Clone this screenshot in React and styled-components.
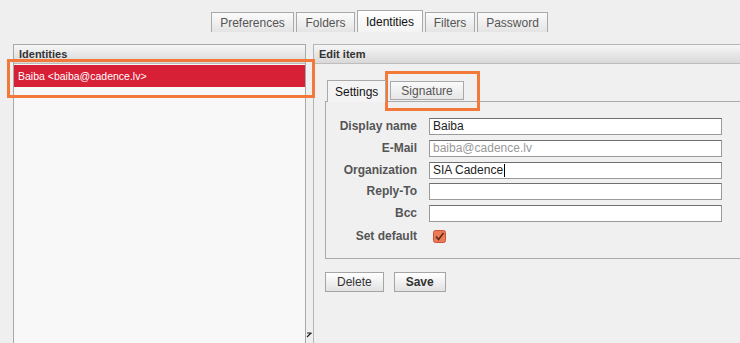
import styled, { createGlobalStyle } from "styled-components";

const GlobalStyle = createGlobalStyle`
  html, body {
    margin: 0;
    padding: 0;
    background: #efefef;
    font-family: "Liberation Sans", Arial, sans-serif;
    overflow: hidden;
  }
`;

const Page = styled.div`
  position: relative;
  width: 740px;
  height: 343px;
  overflow: hidden;
`;

const TopTabs = styled.div`
  display: flex;
  align-items: flex-end;
  gap: 2px;
  height: 32px;
  padding-left: 211px;
  box-sizing: border-box;
`;

const TopTab = styled.div`
  width: ${(p) => p.$w}px;
  height: ${(p) => (p.$active ? "22px" : "20px")};
  display: flex;
  align-items: center;
  justify-content: center;
  box-sizing: border-box;
  border: 1px solid #a9a9a9;
  border-bottom: none;
  background: ${(p) =>
    p.$active
      ? "linear-gradient(#ffffff, #f3f3f3)"
      : "linear-gradient(#fbfbfb, #e4e4e4)"};
  font-size: 12px;
  color: ${(p) => (p.$active ? "#111" : "#555")};
`;

const Main = styled.div`
  display: flex;
  align-items: stretch;
  margin-top: 12px;
  height: 320px;
`;

const LeftPanel = styled.div`
  width: 293px;
  margin-left: 13px;
  border: 1px solid #a8a8a8;
  background: #f8f8f8;
  box-sizing: border-box;
  display: flex;
  flex-direction: column;
`;

const Resizer = styled.div`
  width: 7px;
  display: flex;
  align-items: flex-end;
  padding-bottom: 26px;
`;

const RightPanel = styled.div`
  flex: 1;
  border: 1px solid #b5b5b5;
  border-right: none;
  background: #f0f0f0;
  box-sizing: border-box;
  display: flex;
  flex-direction: column;
`;

const PanelHeader = styled.div`
  height: 18px;
  padding-left: 5px;
  display: flex;
  align-items: center;
  background: linear-gradient(#f6f6f6, #d9d9d9);
  border-bottom: 1px solid #bdbdbd;
  font-size: 11px;
  font-weight: bold;
  color: #333;
`;

const ListRow = styled.div`
  margin-top: 1px;
  height: 22px;
  padding-left: 4px;
  display: flex;
  align-items: center;
  background: ${(p) => (p.$selected ? "#d71f36" : "transparent")};
  color: ${(p) => (p.$selected ? "#fff" : "#333")};
  font-size: 10.5px;
`;

const EditBody = styled.div`
  padding: 16px 0 0 11px;
`;

const SubTabs = styled.div`
  display: flex;
  align-items: flex-end;
  gap: 4px;
  padding-left: 2px;
  height: 21px;
`;

const SubTab = styled.div`
  height: ${(p) => (p.$active ? "22px" : "19px")};
  padding: 0 ${(p) => (p.$active ? "7px" : "10px")};
  display: flex;
  align-items: center;
  box-sizing: border-box;
  border: 1px solid #a9a9a9;
  border-bottom: ${(p) => (p.$active ? "none" : "1px solid #a9a9a9")};
  background: ${(p) =>
    p.$active ? "#f4f4f4" : "linear-gradient(#fafafa, #e6e6e6)"};
  font-size: 12px;
  color: ${(p) => (p.$active ? "#111" : "#555")};
  margin-bottom: ${(p) => (p.$active ? "-1px" : "1px")};
  position: relative;
  z-index: ${(p) => (p.$active ? 1 : 0)};
`;

const TabBox = styled.div`
  border: 1px solid #a9a9a9;
  border-right: none;
  padding: 16px 0 13px 0;
  display: grid;
  grid-template-columns: 91px 293px;
  column-gap: 12px;
  row-gap: 4.75px;
  align-items: center;
`;

const Label = styled.div`
  text-align: right;
  font-size: 12px;
  font-weight: bold;
  color: #555;
  line-height: 17px;
  margin-top: ${(p) => (p.$offset ? "1px" : "0")};
`;

const Field = styled.div`
  height: 17px;
  box-sizing: border-box;
  border: 1px solid #9a9a9a;
  border-top-color: #707070;
  background: #fff;
  padding-left: 3px;
  font-size: 12px;
  line-height: 15px;
  color: ${(p) => (p.$muted ? "#999" : "#222")};
  display: flex;
  align-items: center;
`;

const Caret = styled.span`
  display: inline-block;
  width: 1px;
  height: 13px;
  background: #000;
  margin-left: 1px;
`;

const CheckCell = styled.div`
  margin-top: 1px;
  padding-left: 4px;
  height: 13px;
  display: flex;
`;

const Actions = styled.div`
  display: flex;
  gap: 10px;
  margin-top: 13px;
`;

const Button = styled.button`
  height: 20px;
  padding: 0 11px;
  border: 1px solid #a5a5a5;
  background: linear-gradient(#ffffff, #e2e2e2);
  font-family: "Liberation Sans", Arial, sans-serif;
  font-size: 12px;
  font-weight: ${(p) => (p.$primary ? "bold" : "normal")};
  color: #333;
  cursor: pointer;
`;

const Highlight = styled.div`
  position: absolute;
  border: 3px solid #f2793a;
  box-sizing: border-box;
  pointer-events: none;
`;

const CheckBox = () => (
  <svg width="13" height="13" viewBox="0 0 13 13">
    <rect x="0.5" y="0.5" width="12" height="12" rx="2" fill="#ec7a55" stroke="#c8553a" />
    <path d="M3 6.5 L5.5 9.5 L10.5 3" fill="none" stroke="#5a2a1a" strokeWidth="1.6" />
  </svg>
);

const ResizeIcon = () => (
  <svg width="6" height="6" viewBox="0 0 6 6">
    <path d="M1 5 L5 1 M1 1 L5 1 L5 2" stroke="#222" strokeWidth="1.2" fill="none" />
  </svg>
);

const rows = [
  { label: "Display name", value: "Baiba" },
  { label: "E-Mail", value: "baiba@cadence.lv", muted: true },
  { label: "Organization", value: "SIA Cadence", caret: true },
  { label: "Reply-To", value: "" },
  { label: "Bcc", value: "" },
];

const tabs = [
  { name: "Preferences", w: 83 },
  { name: "Folders", w: 59 },
  { name: "Identities", w: 66 },
  { name: "Filters", w: 50 },
  { name: "Password", w: 71 },
];

export default function App() {
  return (
    <Page>
      <GlobalStyle />
      <TopTabs>
        {tabs.map((t) => (
          <TopTab key={t.name} $w={t.w} $active={t.name === "Identities"}>
            {t.name}
          </TopTab>
        ))}
      </TopTabs>
      <Main>
        <LeftPanel>
          <PanelHeader>Identities</PanelHeader>
          <ListRow $selected>Baiba &lt;baiba@cadence.lv&gt;</ListRow>
        </LeftPanel>
        <Resizer>
          <ResizeIcon />
        </Resizer>
        <RightPanel>
          <PanelHeader>Edit item</PanelHeader>
          <EditBody>
            <SubTabs>
              <SubTab $active>Settings</SubTab>
              <SubTab>Signature</SubTab>
            </SubTabs>
            <TabBox>
              {rows.map((r) => [
                <Label key={r.label + "-l"}>{r.label}</Label>,
                <Field key={r.label + "-f"} $muted={r.muted}>
                  {r.value}
                  {r.caret && <Caret />}
                </Field>,
              ])}
              <Label $offset>Set default</Label>
              <CheckCell>
                <CheckBox />
              </CheckCell>
            </TabBox>
            <Actions>
              <Button>Delete</Button>
              <Button $primary>Save</Button>
            </Actions>
          </EditBody>
        </RightPanel>
      </Main>
      <Highlight style={{ left: 7, top: 59, width: 308, height: 39 }} />
      <Highlight style={{ left: 385, top: 71, width: 95, height: 40 }} />
    </Page>
  );
}
